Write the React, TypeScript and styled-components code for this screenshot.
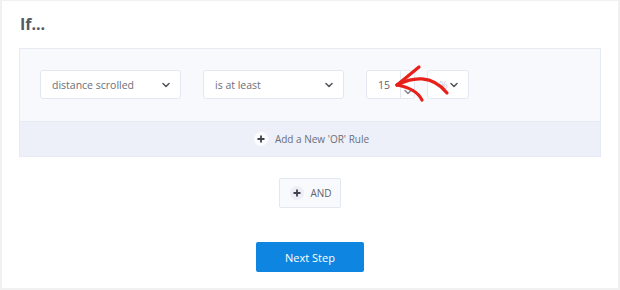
import React from 'react';
import styled, { createGlobalStyle } from 'styled-components';

const GlobalStyle = createGlobalStyle`
  html, body {
    margin: 0;
    padding: 0;
    background: #ffffff;
  }
  * {
    box-sizing: border-box;
  }
`;

const Frame = styled.div`
  width: 620px;
  height: 290px;
  border: 2px solid #f1f1f1;
  border-top-width: 1px;
  background: #fff;
  padding: 14px 17px 0 17px;
  font-family: 'Open Sans', 'Liberation Sans', sans-serif;
  display: flex;
  flex-direction: column;
`;

const Heading = styled.h3`
  margin: 0 0 15px 1px;
  font-family: 'Open Sans', 'Liberation Sans', sans-serif;
  font-size: 16px;
  font-weight: 700;
  line-height: 18px;
  color: #555962;
`;

const Panel = styled.div`
  border: 1px solid #e6eaf2;
  background: #f7f9fd;
`;

const RuleRow = styled.div`
  display: flex;
  align-items: center;
  padding: 21px 20px 22px;
`;

const Select = styled.div<{ $width: number; $gap?: number }>`
  width: ${p => p.$width}px;
  height: 29px;
  margin-right: ${p => p.$gap ?? 22}px;
  background: #fff;
  border: 1px solid #e3e7ef;
  border-radius: 3px;
  display: flex;
  align-items: center;
  justify-content: space-between;
  padding: 0 10px 0 11px;
  font-size: 10.5px;
  color: #6b6f78;
`;

const NumberBox = styled.div`
  width: 49px;
  height: 29px;
  margin-right: 12px;
  background: #fff;
  border: 1px solid #e3e7ef;
  border-radius: 3px;
  display: flex;
  font-size: 10.5px;
  color: #5f636c;
`;

const NumberValue = styled.div`
  flex: 1;
  display: flex;
  align-items: center;
  padding-left: 11px;
`;

const Spinner = styled.div`
  width: 14px;
  border-left: 1px solid #e3e7ef;
  display: flex;
  align-items: flex-end;
  justify-content: center;
  padding-bottom: 3px;
`;

const Unit = styled.span`
  color: #c8cbd1;
`;

const OrRow = styled.div`
  height: 35px;
  background: #edf0f8;
  border-top: 1px solid #e6eaf2;
  display: flex;
  align-items: center;
  justify-content: center;
  gap: 7px;
  padding-left: 3px;
  font-size: 10px;
  color: #6b6f78;
`;

const PlusCircle = styled.span<{ $bg: string }>`
  width: 14px;
  height: 14px;
  border-radius: 50%;
  background: ${p => p.$bg};
  display: inline-flex;
  align-items: center;
  justify-content: center;
`;

const Center = styled.div<{ $top: number }>`
  display: flex;
  justify-content: center;
  margin-top: ${p => p.$top}px;
`;

const AndButton = styled.button`
  width: 62px;
  height: 30px;
  background: #f9fafd;
  border: 1px solid #e3e7ef;
  border-radius: 2px;
  display: flex;
  align-items: center;
  justify-content: center;
  gap: 6px;
  font-family: 'Open Sans', 'Liberation Sans', sans-serif;
  font-size: 10px;
  color: #5f636c;
  padding: 0 0 0 2px;
`;

const NextButton = styled.button`
  width: 108px;
  height: 30px;
  background: #0e86e1;
  border: none;
  border-radius: 2px;
  color: #fff;
  font-family: 'Open Sans', 'Liberation Sans', sans-serif;
  font-size: 11px;
  padding: 0;
`;

const ArrowMark = styled.svg`
  position: absolute;
  left: 390px;
  top: 62px;
  overflow: visible;
  pointer-events: none;
`;

const Chevron = ({ color = '#55595f' }: { color?: string }) => (
  <svg width="8" height="6" viewBox="0 0 8 6">
    <path d="M1 1.5 L4 4.5 L7 1.5" fill="none" stroke={color} strokeWidth="1.6" strokeLinecap="round" strokeLinejoin="round" />
  </svg>
);

const Plus = () => (
  <svg width="8" height="8" viewBox="0 0 8 8">
    <path d="M4 0.5 V7.5 M0.5 4 H7.5" stroke="#3e4249" strokeWidth="1.8" />
  </svg>
);

export default function App() {
  return (
    <>
      <GlobalStyle />
      <Frame>
        <Heading>If...</Heading>
        <Panel>
          <RuleRow>
            <Select $width={141}>
              <span>distance scrolled</span>
              <Chevron />
            </Select>
            <Select $width={141}>
              <span>is at least</span>
              <Chevron />
            </Select>
            <NumberBox>
              <NumberValue>15</NumberValue>
              <Spinner>
                <Chevron color="#8a8e96" />
              </Spinner>
            </NumberBox>
            <Select $width={42} $gap={0}>
              <Unit>%</Unit>
              <Chevron />
            </Select>
          </RuleRow>
          <OrRow>
            <PlusCircle $bg="#fbfcfe"><Plus /></PlusCircle>
            <span>Add a New 'OR' Rule</span>
          </OrRow>
        </Panel>
        <Center $top={21}>
          <AndButton>
            <PlusCircle $bg="#eceff6"><Plus /></PlusCircle>
            <span>AND</span>
          </AndButton>
        </Center>
        <Center $top={34}>
          <NextButton>Next Step</NextButton>
        </Center>
        <ArrowMark width="70" height="50" viewBox="0 0 70 50">
          <path d="M7 23 C 22 15, 42 12, 57 31" fill="none" stroke="#e8201a" strokeWidth="3.2" strokeLinecap="round" />
          <path d="M7 23 L 29 5" fill="none" stroke="#e8201a" strokeWidth="3.2" strokeLinecap="round" />
          <path d="M7 23 C 18 25, 28 30, 32 38" fill="none" stroke="#e8201a" strokeWidth="3.2" strokeLinecap="round" />
        </ArrowMark>
      </Frame>
    </>
  );
}
